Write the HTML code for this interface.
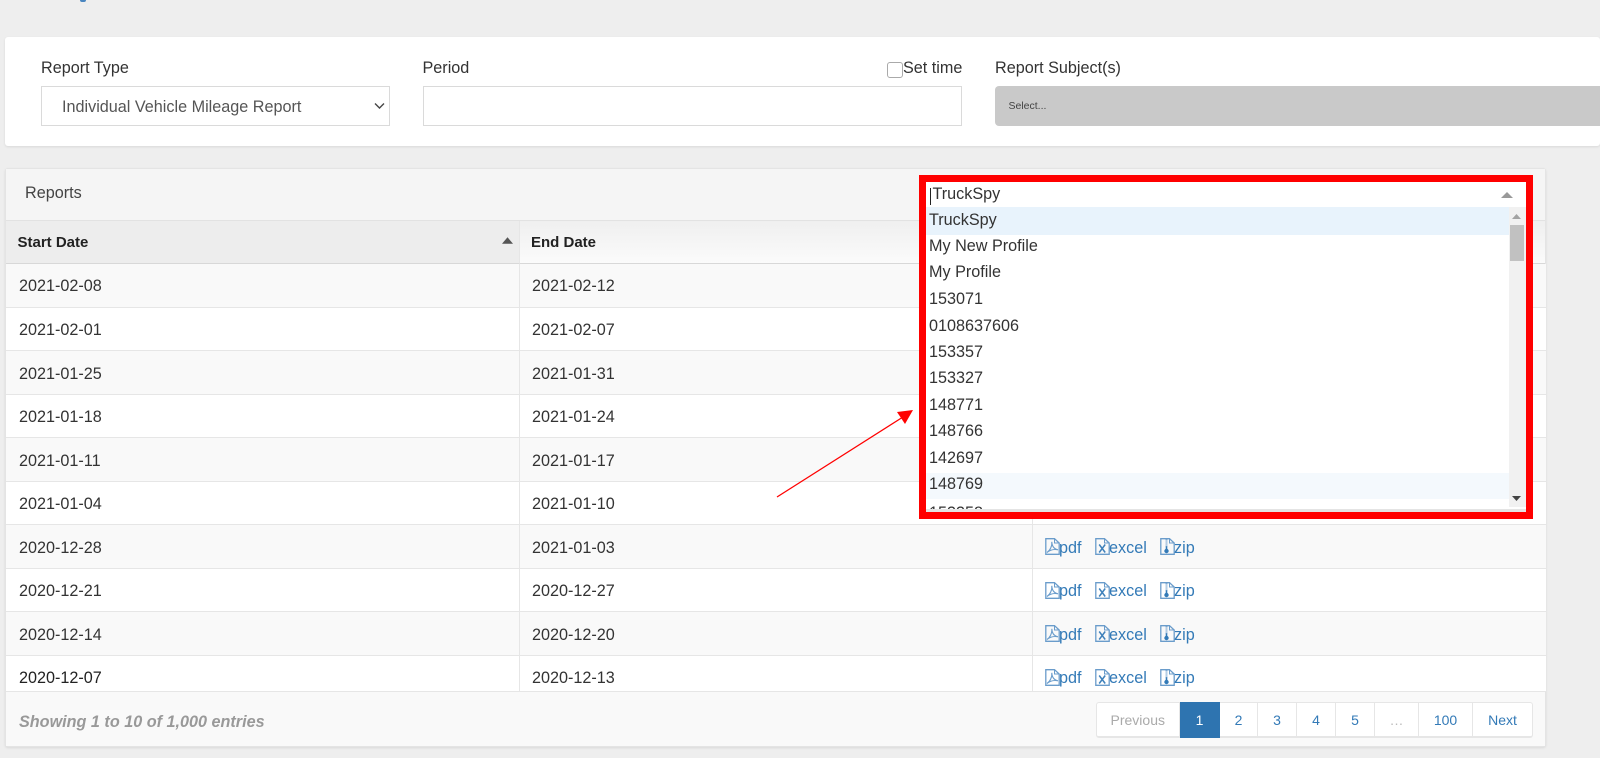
<!DOCTYPE html>
<html lang="en"><head><meta charset="utf-8"><title>Reports</title>
<style>
*{box-sizing:border-box}
html,body{margin:0;padding:0;width:1600px;height:758px;overflow:hidden;background:#eee;font-family:"Liberation Sans",sans-serif;font-size:16.2px;color:#333}
.a{position:absolute;white-space:nowrap}
.t{position:absolute;white-space:nowrap;line-height:20px;height:20px}
.card{position:absolute;left:5px;top:37px;width:1595px;height:109px;background:#fff;border-radius:3px;box-shadow:0 1px 2px #d8d8d8}
.box{position:absolute;background:#fff;border:1px solid #dadada}
.panel{position:absolute;left:5px;top:168px;width:1541px;height:579px;background:#fff;border:1px solid #e4e4e4;border-radius:3px;box-shadow:0 1px 2px #d8d8d8;overflow:hidden}
.row{position:absolute;left:6px;width:1540px;height:43.5px;border-bottom:1px solid #e6e6e6}
.row.o{background:#f9f9f9}.row.e{background:#fff}
.row i{position:absolute;top:0;bottom:0;width:1px;background:#e6e6e6}
.row span{position:absolute;top:12.5px;line-height:20px;color:#333}
.row a{position:absolute;top:12.5px;line-height:20px;color:#337ab7;text-decoration:none}
.row svg{position:absolute;top:13px;width:15px;height:17px}
.pg{position:absolute;top:702px;height:36px;background:#fff;border:1px solid #e6e6e6;border-left:0;border-bottom:2px solid #e6e6e6;text-align:center;font-size:14px;line-height:34px;color:#337ab7}
.opt{position:absolute;left:926px;width:583px;height:26.4px;line-height:28px;padding-left:3px;color:#333;background:#fff}
</style></head>
<body>
<svg width="0" height="0" style="position:absolute">
<symbol id="pdf" viewBox="0 0 15 17"><path d="M.8 .7H9.5L14.2 5V16.3H.8Z" fill="none" stroke="#6a9ccb" stroke-width="1.3"/><path d="M9.5 .7V5H14.2" fill="none" stroke="#6a9ccb" stroke-width="1"/><path d="M2 14.5C5 12.5 7.3 8 6.8 3.8 7 8 9 11 13 11.8 9 11 5 12 2 14.5Z" fill="none" stroke="#6a9ccb" stroke-width="1.1"/></symbol>
<symbol id="xls" viewBox="0 0 15 17"><path d="M.8 .7H9.5L14.2 5V16.3H.8Z" fill="none" stroke="#6a9ccb" stroke-width="1.3"/><path d="M9.5 .7V5H14.2" fill="none" stroke="#6a9ccb" stroke-width="1"/><path d="M4.2 6.5 10.2 14.5M10.2 6.5 4.2 14.5" fill="none" stroke="#3f81bb" stroke-width="1.5"/></symbol>
<symbol id="zip" viewBox="0 0 15 17"><path d="M.8 .7H9.5L14.2 5V16.3H.8Z" fill="none" stroke="#6a9ccb" stroke-width="1.3"/><path d="M9.5 .7V5H14.2" fill="none" stroke="#6a9ccb" stroke-width="1"/><path d="M5.5 2H7.5M5.5 4H7.5M5.5 6H7.5M5.5 8H7.5" stroke="#6a9ccb" stroke-width="1"/><path d="M6.5 8.5V11" stroke="#337ab7" stroke-width="1.6"/><circle cx="6.5" cy="13" r="2.2" fill="#337ab7"/></symbol>
</svg>

<div class="a" style="left:80px;top:0;width:6px;height:2px;background:#4a86c0;border-radius:0 0 3px 3px"></div>

<div class="card"></div>
<div class="t" style="left:41px;top:58px">Report Type</div>
<div class="box" style="left:41px;top:86px;width:349px;height:40px"></div>
<div class="t" style="left:62px;top:96.5px;color:#555">Individual Vehicle Mileage Report</div>
<svg class="a" style="left:373px;top:102px" width="13" height="8" viewBox="0 0 13 8"><path d="M2 1.5 6.5 6 11 1.5" fill="none" stroke="#444" stroke-width="1.4"/></svg>
<div class="t" style="left:422.5px;top:58px">Period</div>
<div class="box" style="left:422.5px;top:86px;width:539.5px;height:40px"></div>
<div class="a" style="left:887px;top:62px;width:16px;height:16px;border:1px solid #aaa;border-radius:3px;background:#fff"></div>
<div class="t" style="left:903px;top:58px">Set time</div>
<div class="t" style="left:995px;top:58px">Report Subject(s)</div>
<div class="a" style="left:995px;top:86px;width:605px;height:40px;background:#c9c9c9;border-radius:4px 0 0 4px"></div>
<div class="t" style="left:1008.5px;top:96px;font-size:10.5px;color:#444">Select...</div>

<div class="panel"></div>
<div class="a" style="left:6px;top:169px;width:1539px;height:52px;background:#f5f5f5;border-bottom:1px solid #e2e2e2"></div>
<div class="t" style="left:25px;top:183px;color:#444">Reports</div>
<div class="a" style="left:6px;top:221px;width:513px;height:43px;background:#ededed;border-bottom:1px solid #d8d8d8"></div>
<div class="a" style="left:519px;top:221px;width:1026px;height:43px;background:linear-gradient(#efefef,#fbfbfb);border-bottom:1px solid #d8d8d8;border-left:1px solid #e6e6e6"></div>
<div class="t" style="left:17.5px;top:233px;font-weight:bold;color:#222;font-size:15px">Start Date</div>
<div class="t" style="left:531px;top:233px;font-weight:bold;color:#222;font-size:15px">End Date</div>
<svg class="a" style="left:501.5px;top:236.5px" width="11" height="7" viewBox="0 0 12 7"><path d="M6 0 12 7H0Z" fill="#555"/></svg>

<div class="row o" style="top:264px"><i style="left:513px"></i><i style="left:1026px"></i><span style="left:13px;top:11.5px">2021-02-08</span><span style="left:526px;top:11.5px">2021-02-12</span></div>
<div class="row e" style="top:307.5px"><i style="left:513px"></i><i style="left:1026px"></i><span style="left:13px">2021-02-01</span><span style="left:526px">2021-02-07</span></div>
<div class="row o" style="top:351px"><i style="left:513px"></i><i style="left:1026px"></i><span style="left:13px">2021-01-25</span><span style="left:526px">2021-01-31</span></div>
<div class="row e" style="top:394.5px"><i style="left:513px"></i><i style="left:1026px"></i><span style="left:13px">2021-01-18</span><span style="left:526px">2021-01-24</span></div>
<div class="row o" style="top:438px"><i style="left:513px"></i><i style="left:1026px"></i><span style="left:13px">2021-01-11</span><span style="left:526px">2021-01-17</span></div>
<div class="row e" style="top:481.5px"><i style="left:513px"></i><i style="left:1026px"></i><span style="left:13px">2021-01-04</span><span style="left:526px">2021-01-10</span>
<svg style="left:1039px"><use href="#pdf"/></svg><svg style="left:1089px"><use href="#xls"/></svg><svg style="left:1154px"><use href="#zip"/></svg></div>
<div class="row o" style="top:525px"><i style="left:513px"></i><i style="left:1026px"></i><span style="left:13px">2020-12-28</span><span style="left:526px">2021-01-03</span>
<svg style="left:1039px"><use href="#pdf"/></svg><a style="left:1053px">pdf</a><svg style="left:1089px"><use href="#xls"/></svg><a style="left:1103px">excel</a><svg style="left:1154px"><use href="#zip"/></svg><a style="left:1168px">zip</a></div>
<div class="row e" style="top:568.5px"><i style="left:513px"></i><i style="left:1026px"></i><span style="left:13px">2020-12-21</span><span style="left:526px">2020-12-27</span>
<svg style="left:1039px"><use href="#pdf"/></svg><a style="left:1053px">pdf</a><svg style="left:1089px"><use href="#xls"/></svg><a style="left:1103px">excel</a><svg style="left:1154px"><use href="#zip"/></svg><a style="left:1168px">zip</a></div>
<div class="row o" style="top:612px"><i style="left:513px"></i><i style="left:1026px"></i><span style="left:13px">2020-12-14</span><span style="left:526px">2020-12-20</span>
<svg style="left:1039px"><use href="#pdf"/></svg><a style="left:1053px">pdf</a><svg style="left:1089px"><use href="#xls"/></svg><a style="left:1103px">excel</a><svg style="left:1154px"><use href="#zip"/></svg><a style="left:1168px">zip</a></div>
<div class="row e" style="top:655.5px;height:36.5px"><i style="left:513px"></i><i style="left:1026px"></i><span style="left:13px;color:#222">2020-12-07</span><span style="left:526px">2020-12-13</span>
<svg style="left:1039px"><use href="#pdf"/></svg><a style="left:1053px">pdf</a><svg style="left:1089px"><use href="#xls"/></svg><a style="left:1103px">excel</a><svg style="left:1154px"><use href="#zip"/></svg><a style="left:1168px">zip</a></div>

<div class="a" style="left:6px;top:692px;width:1539px;height:54px;background:#f9f9f9"></div>
<div class="t" style="left:19px;top:711.5px;font-weight:bold;font-style:italic;color:#999">Showing 1 to 10 of 1,000 entries</div>
<div class="pg" style="left:1095.5px;width:84.5px;border-left:1px solid #e6e6e6;border-radius:3px 0 0 3px;color:#aaa">Previous</div>
<div class="pg" style="left:1180px;width:40px;background:#2e74b0;border-color:#2e74b0;color:#fff">1</div>
<div class="pg" style="left:1220px;width:38px">2</div>
<div class="pg" style="left:1258px;width:39px">3</div>
<div class="pg" style="left:1297px;width:39px">4</div>
<div class="pg" style="left:1336px;width:39px">5</div>
<div class="pg" style="left:1375px;width:44px;color:#bbb">…</div>
<div class="pg" style="left:1419px;width:54px">100</div>
<div class="pg" style="left:1473px;width:60px;border-radius:0 3px 3px 0">Next</div>

<svg class="a" style="left:770px;top:400px" width="150" height="105" viewBox="770 400 150 105"><path d="M777 497 903 417" stroke="#f00" stroke-width="1.3" fill="none"/><path d="M913 410 897 412 905 424Z" fill="#f00"/></svg>

<div class="a" style="left:926px;top:182px;width:600px;height:25px;background:#fff"></div>
<div class="a" style="left:930px;top:188px;width:1px;height:17px;background:#222"></div>
<div class="t" style="left:932.5px;top:183.5px">TruckSpy</div>
<svg class="a" style="left:1501px;top:192px" width="12" height="6" viewBox="0 0 12 6"><path d="M6 0 12 6H0Z" fill="#999"/></svg>
<div class="a" style="left:926px;top:207px;width:600px;height:303px;background:#fff;overflow:hidden"></div>
<div class="opt" style="top:207px;height:28px;background:#e8f3fc;line-height:26px">TruckSpy</div>
<div class="opt" style="top:235px;line-height:22px">My New Profile</div>
<div class="opt" style="top:261.4px;line-height:23px">My Profile</div>
<div class="opt" style="top:285px">153071</div>
<div class="opt" style="top:312.4px">0108637606</div>
<div class="opt" style="top:338px">153357</div>
<div class="opt" style="top:364.4px">153327</div>
<div class="opt" style="top:391px">148771</div>
<div class="opt" style="top:417.4px">148766</div>
<div class="opt" style="top:444px;height:29px">142697</div>
<div class="opt" style="top:473px;height:26px;background:#f4f9fd;line-height:23px">148769</div>
<div class="a" style="left:926px;top:499px;width:583px;height:10px;background:#fff;overflow:hidden"><div style="position:absolute;left:3px;top:1px;line-height:26px">153358</div></div>
<div class="a" style="left:1509px;top:207px;width:17px;height:300px;background:#f1f1f1"></div>
<div class="a" style="left:1510px;top:225px;width:14px;height:36px;background:#c1c1c1"></div>
<svg class="a" style="left:1512px;top:214px" width="9" height="5" viewBox="0 0 9 5"><path d="M4.5 0 9 5H0Z" fill="#a3a3a3"/></svg>
<svg class="a" style="left:1512px;top:496px" width="9" height="5" viewBox="0 0 9 5"><path d="M0 0H9L4.5 5Z" fill="#444"/></svg>
<div class="a" style="left:926px;top:509px;width:600px;height:3px;background:#e4e4e4"></div>
<div class="a" style="left:919px;top:175px;width:614px;height:344px;border:7px solid #f00"></div>
</body></html>
